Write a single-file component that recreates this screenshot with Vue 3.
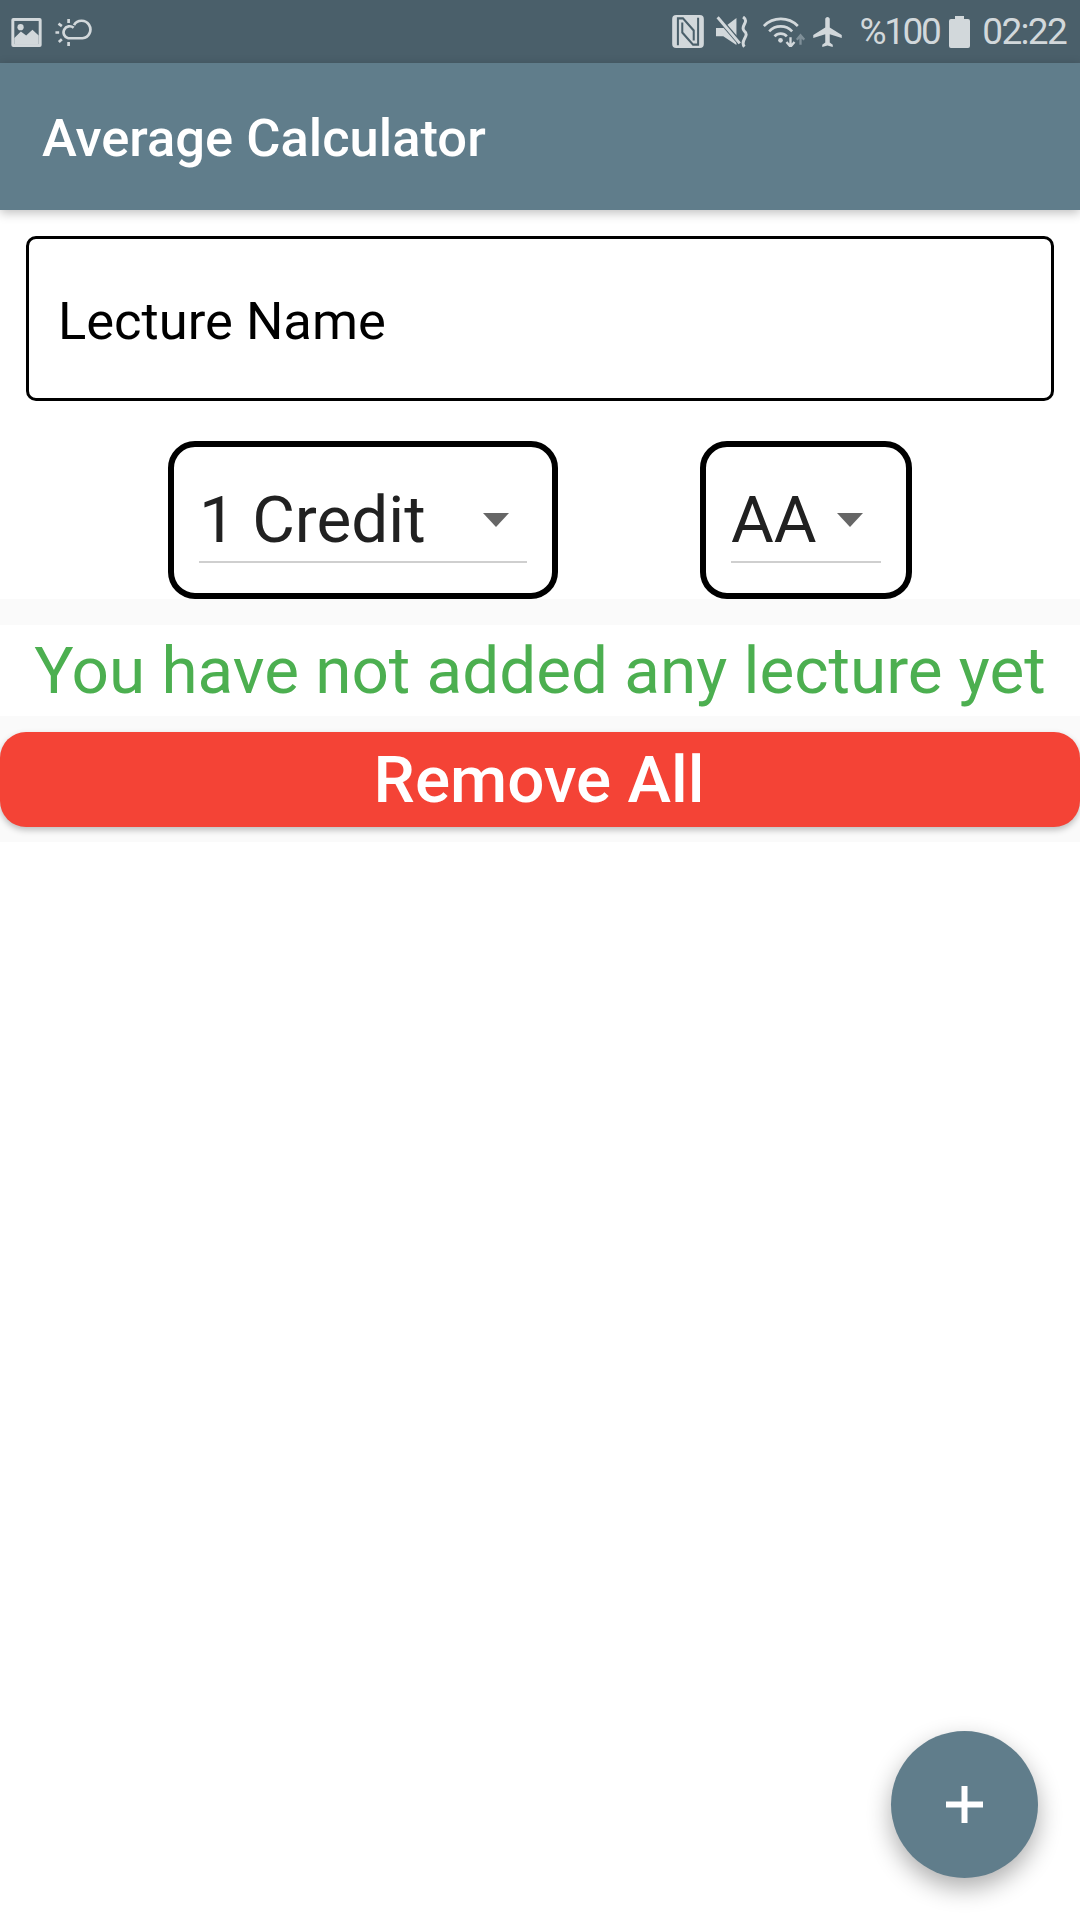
<script setup>
const title = 'Average Calculator'
const placeholder = 'Lecture Name'
const message = 'You have not added any lecture yet'
</script>

<template>
  <div class="screen">
    <header class="status">
      <div class="status-left">
        <svg class="i-image" viewBox="33 47 92 88">
          <rect x="33" y="47" width="92" height="88" rx="6" fill="#d2d8db" />
          <rect x="42" y="56" width="74" height="70" fill="#4a5f6a" />
          <circle cx="61" cy="75" r="9.5" fill="#d2d8db" />
          <polygon points="42,108 62,88 78,100 97,83 116,100 116,127 42,127" fill="#d2d8db" />
        </svg>
        <svg class="i-weather" viewBox="166 52 109 80" fill="none" stroke="#d2d8db" stroke-width="8">
          <path d="M221 78 A18 18 0 1 0 205 109 H247 A26 26 0 1 0 222 70" />
          <path d="M206 52 V64 M206 120 V132 M167 92 H178 M176 66 L186 73 M177 120 L186 112" />
        </svg>
      </div>
      <div class="status-right">
        <svg class="i-nfc" viewBox="38 42 94 98">
          <rect x="38" y="42" width="94" height="98" rx="12" fill="#d2d8db" />
          <path d="M55 132 V52 H70 L102 88 V118 M115 50 V130 H100 L68 94 V64" fill="none" stroke="#4a5f6a" stroke-width="6" />
        </svg>
        <svg class="i-mute" viewBox="165 45 100 95">
          <path d="M168 80 H190 L230 50 V132 L190 105 H168 Z" fill="#d2d8db" />
          <path d="M168 42 L244 130" stroke="#4a5f6a" stroke-width="15" />
          <path d="M173 48 L240 127" stroke="#d2d8db" stroke-width="9" />
          <path d="M250 47 C272 62 238 75 254 90 C272 105 238 118 254 137" fill="none" stroke="#d2d8db" stroke-width="9" />
        </svg>
        <svg class="i-wifi" viewBox="310 45 125 90" fill="none" stroke="#d2d8db" stroke-width="8">
          <path d="M312 72 A72 72 0 0 1 414 72" />
          <path d="M328 88 A48 48 0 0 1 397 88" />
          <path d="M344 103 A25 25 0 0 1 381 103" />
          <circle cx="362" cy="115" r="7" fill="#d2d8db" stroke="none" />
          <path d="M392 106 V130 M380 120 L392 134 L404 120" stroke-width="7" />
          <path d="M422 128 V102 M411 113 L422 100 L433 113" stroke="#7f8f98" stroke-width="7" />
        </svg>
        <svg class="i-plane" viewBox="2 2 19 20">
          <path fill="#d2d8db" d="M21 16v-2l-8-5V3.5c0-.83-.67-1.5-1.5-1.5S10 2.67 10 3.5V9l-8 5v2l8-2.5V19l-2 1.5V22l3.5-1 3.5 1v-1.5L13 19v-5.5l8 2.5z" />
        </svg>
        <span class="pct">%100</span>
        <svg class="i-battery" viewBox="0 0 21 32">
          <path fill="#d2d8db" d="M6 0H15V3H19A2 2 0 0 1 21 5V30A2 2 0 0 1 19 32H2A2 2 0 0 1 0 30V5A2 2 0 0 1 2 3H6Z" />
        </svg>
        <span class="clock">02:22</span>
      </div>
    </header>

    <div class="appbar">{{ title }}</div>

    <div class="name-input">{{ placeholder }}</div>

    <div class="selects">
      <div class="select select-credit">
        <div class="control">
          <span>1 Credit</span>
          <i class="arrow"></i>
        </div>
      </div>
      <div class="select select-grade">
        <div class="control">
          <span>AA</span>
          <i class="arrow"></i>
        </div>
      </div>
    </div>

    <div class="band-top"></div>
    <div class="message">{{ message }}</div>
    <div class="band-bottom">
      <button class="remove">Remove All</button>
    </div>

    <button class="fab" aria-label="Add">
      <svg width="37" height="37" viewBox="0 0 37 37">
        <path d="M15.5 0H21.5V15.5H37V21.5H21.5V37H15.5V21.5H0V15.5H15.5Z" fill="#fff" />
      </svg>
    </button>
  </div>
</template>

<style scoped>
.screen {
  position: relative;
  width: 1080px;
  height: 1920px;
  overflow: hidden;
  background: #fff;
  font-family: Roboto, "Noto Sans", sans-serif;
}
.status {
  height: 63px;
  background: #4a5f6a;
  display: flex;
  align-items: center;
  justify-content: space-between;
  padding: 0 14px 0 11px;
  color: #d2d8db;
}
.status-left,
.status-right {
  display: flex;
  align-items: center;
}
.i-image { width: 31px; height: 29px; margin-top: 1px; }
.i-weather { width: 37px; height: 27px; margin-left: 13px; margin-top: 1px; }
.i-nfc { width: 32px; height: 33px; }
.i-mute { width: 33px; height: 32px; margin-left: 11px; }
.i-wifi { width: 42px; height: 30px; margin-left: 15px; }
.i-plane { width: 33px; height: 30px; margin-left: 6px; }
.i-battery { width: 21px; height: 32px; margin-left: 10px; }
.pct, .clock {
  font-size: 37px;
  line-height: 63px;
  letter-spacing: -1.7px;
}
.pct { margin-left: 15px; letter-spacing: -2.4px; }
.clock { margin-left: 12px; }
.appbar {
  position: relative;
  height: 147px;
  background: #607d8b;
  color: #fff;
  font-size: 52.5px;
  font-weight: 500;
  line-height: 151px;
  padding-left: 42px;
  box-shadow: 0 3px 10px rgba(0, 0, 0, 0.25);
}
.name-input {
  height: 165px;
  margin: 26px 26px 0 26px;
  box-sizing: border-box;
  border: 3px solid #000;
  border-radius: 10px;
  padding-left: 29px;
  font-size: 52.5px;
  line-height: 165px;
  color: #000;
}
.selects {
  display: flex;
  justify-content: center;
  gap: 142px;
  margin-top: 40px;
}
.select {
  box-sizing: border-box;
  height: 158px;
  border: 6px solid #000;
  border-radius: 27px;
  padding: 0 25px;
}
.select-credit { width: 390px; }
.select-grade { width: 212px; }
.control {
  position: relative;
  height: 114px;
  border-bottom: 2px solid #cfcfcf;
  display: flex;
  align-items: flex-end;
  justify-content: space-between;
  font-size: 65.6px;
  line-height: 83px;
  color: #212121;
}
.arrow {
  position: absolute;
  right: 18px;
  top: 66px;
  width: 0;
  height: 0;
  border-left: 13.5px solid transparent;
  border-right: 13.5px solid transparent;
  border-top: 14px solid #666;
}
.band-top {
  height: 26px;
  background: #fafafa;
}
.message {
  height: 91px;
  line-height: 91px;
  text-align: center;
  font-size: 65.6px;
  color: #4caf50;
}
.band-bottom {
  height: 126px;
  box-sizing: border-box;
  padding-top: 16px;
  background: #fafafa;
}
.remove {
  display: block;
  width: 100%;
  height: 95px;
  border: 0;
  border-radius: 26px;
  background: #f44336;
  color: #fff;
  font-family: inherit;
  font-size: 65.6px;
  font-weight: 500;
  padding: 0 2px 0 0;
  box-shadow: 0 3px 6px rgba(0, 0, 0, 0.25);
}
.fab {
  position: absolute;
  right: 42px;
  bottom: 42px;
  width: 147px;
  height: 147px;
  border: 0;
  border-radius: 50%;
  padding: 0;
  background: #607d8b;
  display: flex;
  align-items: center;
  justify-content: center;
  box-shadow: 0 10px 24px rgba(0, 0, 0, 0.32);
}
</style>
